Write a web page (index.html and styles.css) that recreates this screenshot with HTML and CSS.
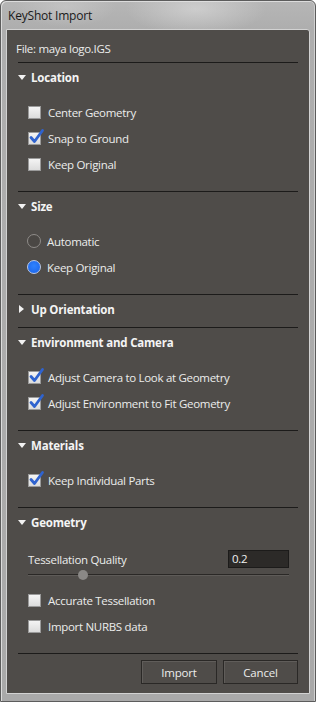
FILE: index.html
```html
<!DOCTYPE html>
<html>
<head>
<meta charset="utf-8">
<link rel="stylesheet" href="styles.css">
</head>
<body>
<div class="window">
  <div class="titlebar">KeyShot Import</div>
  <div class="panel">
    <div class="file">File: maya logo.IGS</div>

    <section class="section">
      <div class="header"><span class="tri down"></span>Location</div>
      <div class="items">
        <div class="row"><span class="cb"></span>Center Geometry</div>
        <div class="row"><span class="cb"><svg class="check" viewBox="0 0 16 16"><path d="M3 8.5 L6.5 12.5 L14.5 1.5" /></svg></span>Snap to Ground</div>
        <div class="row"><span class="cb"></span>Keep Original</div>
      </div>
    </section>

    <section class="section">
      <div class="header"><span class="tri down"></span>Size</div>
      <div class="items">
        <div class="row radio-row"><span class="rb"></span>Automatic</div>
        <div class="row radio-row"><span class="rb on"></span>Keep Original</div>
      </div>
    </section>

    <section class="section collapsed">
      <div class="header"><span class="tri right"></span>Up Orientation</div>
    </section>

    <section class="section">
      <div class="header"><span class="tri down"></span>Environment and Camera</div>
      <div class="items">
        <div class="row"><span class="cb"><svg class="check" viewBox="0 0 16 16"><path d="M3 8.5 L6.5 12.5 L14.5 1.5" /></svg></span>Adjust Camera to Look at Geometry</div>
        <div class="row"><span class="cb"><svg class="check" viewBox="0 0 16 16"><path d="M3 8.5 L6.5 12.5 L14.5 1.5" /></svg></span>Adjust Environment to Fit Geometry</div>
      </div>
    </section>

    <section class="section">
      <div class="header"><span class="tri down"></span>Materials</div>
      <div class="items">
        <div class="row"><span class="cb"><svg class="check" viewBox="0 0 16 16"><path d="M3 8.5 L6.5 12.5 L14.5 1.5" /></svg></span>Keep Individual Parts</div>
      </div>
    </section>

    <section class="section geometry">
      <div class="header"><span class="tri down"></span>Geometry</div>
      <div class="tess">
        <span>Tessellation Quality</span>
        <span class="input">0.2</span>
      </div>
      <div class="slider"><span class="track"></span><span class="knob"></span></div>
      <div class="items after-slider">
        <div class="row"><span class="cb"></span>Accurate Tessellation</div>
        <div class="row"><span class="cb"></span>Import NURBS data</div>
      </div>
    </section>

    <div class="buttons">
      <button class="btn import">Import</button>
      <button class="btn cancel">Cancel</button>
    </div>
  </div>
</div>
</body>
</html>
```

FILE: styles.css
```css
* { box-sizing: border-box; }
html, body { margin: 0; padding: 0; }
body {
  width: 316px;
  height: 702px;
  background: #ffffff;
  font-family: "Open Sans", "Noto Sans", sans-serif;
  font-size: 11.5px;
  letter-spacing: -0.3px;
  overflow: hidden;
}
.window {
  width: 316px;
  height: 702px;
  border: 1px solid #5c5c5c;
  border-radius: 6px 6px 0 0;
  background: linear-gradient(180deg, #b6b6b6 0%, #aeaeae 4%, #a9a9a9 100%);
  box-shadow: inset 1px 1px 0 #dcdcdc, inset -1px 0 0 #d0d0d0;
  display: flex;
  flex-direction: column;
  padding: 0 5px 7px 5px;
}
.titlebar {
  height: 28px;
  flex: none;
  display: flex;
  align-items: center;
  padding-left: 2px;
  padding-top: 1px;
  color: #1a1a1a;
  font-size: 12px;
  letter-spacing: -0.2px;
  background:
    radial-gradient(ellipse 70px 26px at 190px 8px, rgba(225,225,225,0.55), rgba(225,225,225,0)),
    radial-gradient(ellipse 50px 20px at 60px 6px, rgba(215,215,215,0.4), rgba(215,215,215,0));
}
.panel {
  flex: 1;
  border: 1px solid #d2d2d2;
  border-radius: 0 3px 0 0;
  background: #4f4c49;
  padding: 0 11px;
  color: #ececec;
  display: flex;
  flex-direction: column;
}
.file {
  margin-left: -2px;
  padding-top: 11px;
  height: 32px;
  line-height: 16px;
}
.section {
  border-top: 1px solid #1c1b1a;
  padding-bottom: 14px;
}
.section.collapsed { padding-bottom: 4px; }
.header {
  height: 28px;
  display: flex;
  align-items: center;
  font-weight: bold;
  color: #f4f4f4;
  letter-spacing: -0.2px;
}
.tri {
  width: 0; height: 0;
  flex: none;
}
.tri.down {
  border-left: 4px solid transparent;
  border-right: 4px solid transparent;
  border-top: 5px solid #f2f2f2;
  margin-right: 5px;
}
.tri.right {
  border-top: 4px solid transparent;
  border-bottom: 4px solid transparent;
  border-left: 5px solid #f2f2f2;
  margin-left: 1px;
  margin-right: 7px;
}
.items { padding-top: 8px; }
.row {
  height: 26px;
  display: flex;
  align-items: center;
  padding-left: 10px;
}
.cb {
  position: relative;
  width: 13px;
  height: 13px;
  flex: none;
  margin-right: 7px;
  border: 1px solid #9a9a9a;
  background: linear-gradient(180deg, #f4f4f4, #dcdcdc);
}
.check {
  position: absolute;
  left: -1px;
  top: -4px;
  width: 16px;
  height: 16px;
  overflow: visible;
}
.check path {
  fill: none;
  stroke: #2f63cf;
  stroke-width: 2.8;
  stroke-linecap: round;
  stroke-linejoin: round;
}
.radio-row { padding-left: 9px; }
.rb {
  width: 14px;
  height: 14px;
  flex: none;
  border-radius: 50%;
  border: 1.5px solid #8f8c89;
  background: #4a4744;
  margin-right: 6px;
}
.rb.on {
  border: 1px solid #b9c8e6;
  background: radial-gradient(circle at 50% 40%, #2e82ff, #1a62e8);
}
.geometry .tess {
  margin-top: 11px;
  height: 24px;
  display: flex;
  align-items: center;
  justify-content: space-between;
  padding-left: 10px;
  padding-right: 9px;
}
.input {
  width: 61px;
  height: 18px;
  background: #2c2a28;
  border: 1px solid #1c1b1a;
  color: #f0f0f0;
  padding-left: 3px;
  line-height: 16px;
}
.slider {
  position: relative;
  height: 8px;
  margin-left: 10px;
  margin-right: 9px;
  display: flex;
  align-items: center;
}
.track {
  display: block;
  width: 100%;
  height: 2px;
  background: #2a2826;
  border-bottom: 1px solid #5e5b58;
}
.knob {
  position: absolute;
  left: 50px;
  top: -1px;
  width: 10px;
  height: 10px;
  border-radius: 50%;
  background: #8a8886;
}
.after-slider { padding-top: 8px; }
.buttons {
  border-top: 1px solid #1c1b1a;
  padding-top: 6px;
  display: flex;
  justify-content: flex-end;
  gap: 6px;
}
.btn {
  height: 24px;
  font-family: inherit;
  font-size: 11.5px;
  letter-spacing: -0.2px;
  color: #ececec;
  background: #4f4c49;
  border: 1px solid #2a2826;
  box-shadow: inset 1px 1px 0 #605d5a;
  padding: 0;
}
.btn.import { width: 76px; }
.btn.cancel { width: 75px; }
```
